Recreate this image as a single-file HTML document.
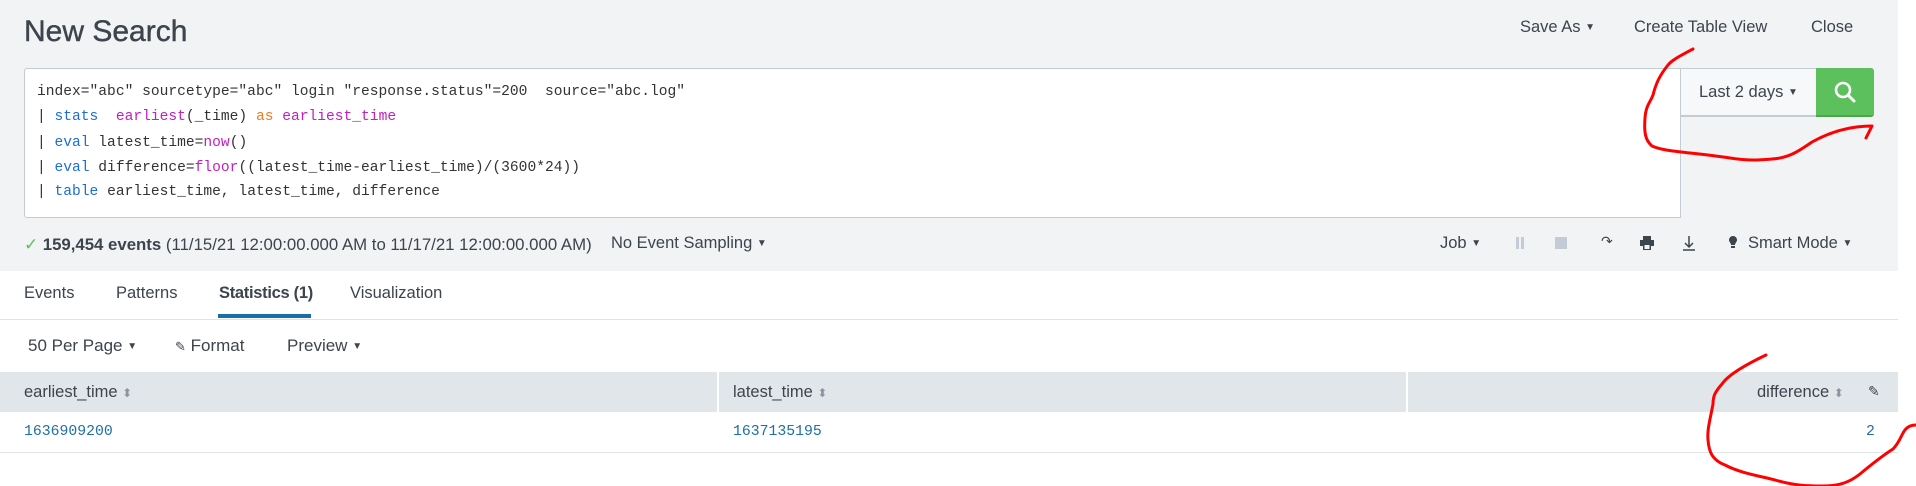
<!DOCTYPE html>
<html><head><meta charset="utf-8"><style>
*{margin:0;padding:0;box-sizing:border-box}
body{width:1916px;height:486px;background:#fff;font-family:"Liberation Sans",sans-serif;color:#3c444d;position:relative;overflow:hidden}
.abs{position:absolute;white-space:pre}
.hdr{position:absolute;left:0;top:0;width:1898px;height:271px;background:#f2f3f5}
.t16{font-size:16.5px}
.code{font-family:"Liberation Mono",monospace;font-size:14.6px;color:#333;left:37px}
.k{color:#1a6fd6}.f{color:#c21ec2}.o{color:#ef7c22}
.car{font-size:10px;vertical-align:2px}
.mono{font-family:"Liberation Mono",monospace;font-size:14.8px;color:#1e6fa5}
</style></head><body>
<div class="hdr"></div>
<div class="abs" style="left:24px;top:15px;font-size:30px;color:#3c444d;-webkit-text-stroke:0.4px #3c444d">New Search</div>
<div class="abs t16" style="left:1520px;top:18px">Save As <span class="car">▼</span></div>
<div class="abs t16" style="left:1634px;top:18px">Create Table View</div>
<div class="abs t16" style="left:1811px;top:18px">Close</div>

<div class="abs" style="left:24px;top:68px;width:1657px;height:150px;background:#fff;border:1px solid #c3cbd4;border-radius:3px 0 0 3px"></div>
<div class="abs" style="left:1680px;top:68px;width:137px;height:49px;background:#f7f8fa;border:1px solid #c3cbd4;border-bottom:2px solid #c3cbd4"></div>
<div class="abs t16" style="left:1699px;top:83px">Last 2 days <span class="car">▼</span></div>
<div class="abs" style="left:1816px;top:68px;width:58px;height:49px;background:#5cc05c;border-radius:0 3px 3px 0;border-bottom:2px solid #4aa84a"></div>
<svg class="abs" style="left:1833px;top:80px" width="24" height="24" viewBox="0 0 24 24"><circle cx="10" cy="10" r="7" fill="none" stroke="#fff" stroke-width="2.6"/><path d="M15 15l6 6" stroke="#fff" stroke-width="3" stroke-linecap="round"/></svg>

<div class="abs code" style="top:84px">index="abc" sourcetype="abc" login "response.status"=200  source="abc.log"</div>
<div class="abs code" style="top:109px">| <span class="k">stats</span>  <span class="f">earliest</span>(_time) <span class="o">as</span> <span class="f">earliest_time</span></div>
<div class="abs code" style="top:135px">| <span class="k">eval</span> latest_time=<span class="f">now</span>()</div>
<div class="abs code" style="top:160px">| <span class="k">eval</span> difference=<span class="f">floor</span>((latest_time-earliest_time)/(3600*24))</div>
<div class="abs code" style="top:184px">| <span class="k">table</span> earliest_time, latest_time, difference</div>

<div class="abs t16" style="left:24px;top:234px;font-size:16.8px"><span style="color:#5cc05c">✓</span> <b>159,454 events</b> (11/15/21 12:00:00.000 AM to 11/17/21 12:00:00.000 AM)</div>
<div class="abs t16" style="left:611px;top:234px">No Event Sampling <span class="car">▼</span></div>
<div class="abs t16" style="left:1440px;top:234px">Job <span class="car">▼</span></div>
<div class="abs" style="left:1516px;top:237px;width:3px;height:12px;background:#c3cbd4"></div>
<div class="abs" style="left:1521px;top:237px;width:3px;height:12px;background:#c3cbd4"></div>
<div class="abs" style="left:1555px;top:237px;width:12px;height:12px;background:#c3cbd4"></div>
<div class="abs" style="left:1601px;top:233px;font-size:14px">↷</div>
<svg class="abs" style="left:1640px;top:236px" width="14" height="14" viewBox="0 0 14 14"><rect x="3" y="0" width="8" height="4" fill="#3c444d"/><rect x="0" y="4" width="14" height="6" fill="#3c444d"/><rect x="3" y="8" width="8" height="6" fill="#3c444d"/><rect x="4.5" y="9" width="5" height="4" fill="#f2f3f5"/></svg>
<svg class="abs" style="left:1682px;top:235px" width="14" height="16" viewBox="0 0 14 16"><path d="M7 1v11M3 8l4 4 4-4M1 15h12" stroke="#3c444d" stroke-width="1.5" fill="none"/></svg>
<svg class="abs" style="left:1729px;top:236px" width="8" height="14" viewBox="0 0 8 14"><path d="M4 0a4 4 0 0 1 4 4c0 2-2 3-2 5H2c0-2-2-3-2-5a4 4 0 0 1 4-4z" fill="#3c444d"/><rect x="2" y="10" width="4" height="2" fill="#3c444d"/></svg>
<div class="abs t16" style="left:1748px;top:234px">Smart Mode <span class="car">▼</span></div>

<div class="abs t16" style="left:24px;top:284px">Events</div>
<div class="abs t16" style="left:116px;top:284px">Patterns</div>
<div class="abs t16" style="left:219px;top:284px;color:#3c444d;font-weight:bold;letter-spacing:-0.3px">Statistics (1)</div>
<div class="abs t16" style="left:350px;top:284px">Visualization</div>
<div class="abs" style="left:218px;top:314px;width:93px;height:4px;background:#1a6fa5"></div>
<div class="abs" style="left:0;top:319px;width:1898px;height:1px;background:#dfe3e8"></div>

<div class="abs t16" style="left:28px;top:336px;font-size:17px">50 Per Page <span class="car">▼</span></div>
<div class="abs t16" style="left:175px;top:336px;font-size:17px"><span style="font-size:13px">✎</span> Format</div>
<div class="abs t16" style="left:287px;top:336px;font-size:17px">Preview <span class="car">▼</span></div>

<div class="abs" style="left:0;top:372px;width:1898px;height:40px;background:#e1e6eb"></div>
<div class="abs" style="left:717px;top:372px;width:2px;height:40px;background:#fff"></div>
<div class="abs" style="left:1406px;top:372px;width:2px;height:40px;background:#fff"></div>
<div class="abs t16" style="left:24px;top:383px">earliest_time <span style="color:#8a95a1;font-size:12px">⬍</span></div>
<div class="abs t16" style="left:733px;top:383px">latest_time <span style="color:#8a95a1;font-size:12px">⬍</span></div>
<div class="abs t16" style="left:1757px;top:383px">difference <span style="color:#8a95a1;font-size:12px">⬍</span></div>
<div class="abs" style="left:1868px;top:383px;font-size:14px">✎</div>
<div class="abs mono" style="left:24px;top:424px">1636909200</div>
<div class="abs mono" style="left:733px;top:424px">1637135195</div>
<div class="abs mono" style="left:1866px;top:424px">2</div>
<div class="abs" style="left:0;top:452px;width:1898px;height:1px;background:#e1e6eb"></div>

<svg class="abs" style="left:0;top:0" width="1916" height="486" viewBox="0 0 1916 486">
<path d="M1693 49 C1680 56 1672 60 1668 65 C1660 75 1656 83 1653 95 C1650 103 1646 105 1645 118 C1644 132 1645 140 1652 146 C1665 152 1690 152 1730 158 C1750 161 1760 160 1772 159 C1790 158 1800 150 1812 142 C1830 132 1850 126 1872 126 L1866 138" fill="none" stroke="#f00" stroke-width="3" stroke-linecap="round" stroke-linejoin="round"/>
<path d="M1766 355 C1745 365 1728 375 1722 384 C1715 392 1713 396 1713 404 C1710 420 1707 430 1708 440 C1709 452 1712 460 1725 465 C1740 473 1760 476 1775 480 C1795 486 1810 486 1822 486 C1840 486 1850 482 1860 474 C1872 464 1882 456 1893 449 C1900 442 1902 433 1905 430 C1908 426 1912 425 1916 425" fill="none" stroke="#f00" stroke-width="3" stroke-linecap="round"/>
</svg>
</body></html>
